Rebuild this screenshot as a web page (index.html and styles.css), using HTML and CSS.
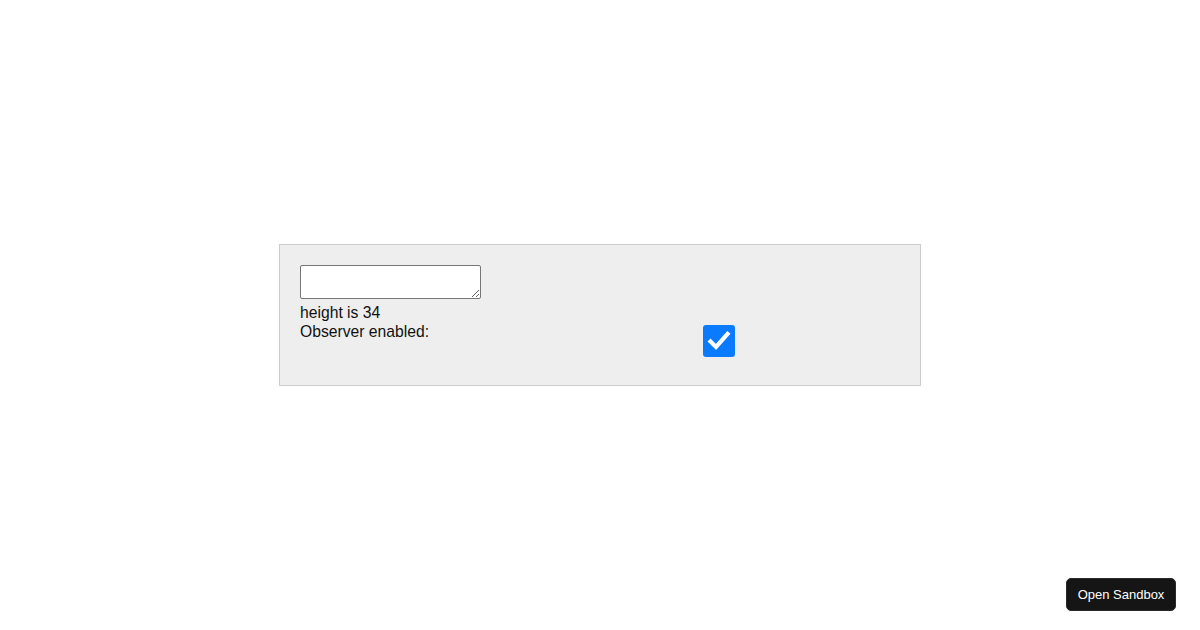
FILE: index.html
```html
<!DOCTYPE html>
<html>
<head>
<meta charset="utf-8">
<link rel="stylesheet" href="styles.css">
</head>
<body>
<main class="stage">
  <section class="panel">
    <div class="field"><textarea class="area"></textarea></div>
    <div class="line">height is 34</div>
    <div class="row">
      <span class="label">Observer enabled:</span>
      <span class="check" role="checkbox" aria-checked="true">
        <svg viewBox="0 0 32 32" width="32" height="32">
          <rect x="0" y="0" width="32" height="32" rx="3" fill="#0a7bff"/>
          <path d="M7.5 16.5 L13 22 L24.5 9" fill="none" stroke="#fff" stroke-width="4.2" stroke-linecap="square" stroke-linejoin="miter"/>
        </svg>
      </span>
    </div>
  </section>
</main>
<button class="sandbox">Open Sandbox</button>
</body>
</html>
```
FILE: styles.css
```css
html, body {
  margin: 0;
  padding: 0;
  background: #fff;
  width: 1200px;
  height: 630px;
  overflow: hidden;
  font-family: "Liberation Sans", Arial, sans-serif;
}
.stage {
  display: flex;
  justify-content: center;
  padding-top: 244px;
}
.panel {
  width: 600px;
  padding: 20px;
  background: #eeeeee;
  border: 1px solid #cccccc;
  font-size: 15.7px;
  color: #111;
  height: 100px;
}
.field {
  line-height: normal;
  height: 38px;
}
.area {
  width: 181px;
  height: 34px;
  box-sizing: border-box;
  margin: 0;
  border: 1px solid #767676;
  border-radius: 2px;
  background: #fff;
  vertical-align: baseline;
}
.line {
  line-height: 19px;
}
.row {
  display: flex;
  align-items: flex-start;
  line-height: 19px;
}
.check {
  display: block;
  width: 32px;
  height: 32px;
  margin-left: 274px;
  margin-top: 3px;
}
.check svg { display: block; }
.sandbox {
  position: fixed;
  right: 24px;
  bottom: 19px;
  width: 110px;
  height: 33px;
  background: #151515;
  color: #fff;
  border: 1px solid #2a2a2a;
  border-radius: 5px;
  font-family: "Liberation Sans", Arial, sans-serif;
  font-size: 13px;
  padding: 0;
}
```
